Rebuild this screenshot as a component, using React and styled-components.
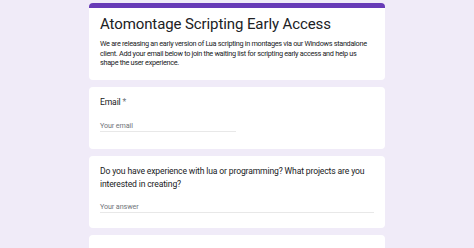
import React from "react";
import styled, { createGlobalStyle } from "styled-components";

const GlobalStyle = createGlobalStyle`
  body {
    margin: 0;
    background-color: #f0ebf8;
    font-family: Roboto, "Liberation Sans", sans-serif;
    color: #202124;
  }
`;

const FormContainer = styled.div`
  width: 296px;
  margin: 3px auto 0;
  display: flex;
  flex-direction: column;
  gap: 7px;
`;

const Card = styled.div`
  background-color: white;
  border-radius: 4px;
  padding: ${(props) => props.$padding || "12px 11px"};
  border-top: ${(props) => (props.$header ? "5px solid #673ab7" : "none")};
  height: ${(props) => props.$height || "auto"};
  box-sizing: border-box;
  overflow: hidden;
`;

const Title = styled.h1`
  margin: 0 0 5px;
  font-size: 15px;
  font-weight: 400;
  line-height: 20px;
  letter-spacing: -0.1px;
`;

const Description = styled.p`
  margin: 0;
  font-size: 7.3px;
  line-height: 9.5px;
  letter-spacing: -0.3px;
  white-space: pre-line;
`;

const Question = styled.div`
  font-size: 8.6px;
  line-height: 13px;
  letter-spacing: -0.15px;

  span {
    color: #70757a;
  }
`;

const AnswerInput = styled.div`
  margin-top: ${(props) => props.$gap || "12px"};
  width: ${(props) => props.$width || "100%"};
  font-size: 7.2px;
  letter-spacing: -0.1px;
  color: #70757a;
  padding-bottom: 1px;
  border-bottom: 1px solid #e8e8e8;
`;

export default function App() {
  return (
    <>
      <GlobalStyle />
      <FormContainer>
        <Card $header $padding="6px 11px 0" $height="77px">
          <Title>Atomontage Scripting Early Access</Title>
          <Description>
            {
              "We are releasing an early version of Lua scripting in montages via our Windows standalone\nclient.  Add your email below to join the waiting list for scripting early access and help us\nshape the user experience."
            }
          </Description>
        </Card>

        <Card $padding="9px 11px 0" $height="62px">
          <Question>
            Email <span>*</span>
          </Question>
          <AnswerInput $width="136px" $gap="12px">
            Your email
          </AnswerInput>
        </Card>

        <Card $padding="9px 11px 0" $height="72px">
          <Question>
            Do you have experience with lua or programming? What projects are
            you interested in creating?
          </Question>
          <AnswerInput $gap="11px">Your answer</AnswerInput>
        </Card>

        <Card $height="40px" />
      </FormContainer>
    </>
  );
}
